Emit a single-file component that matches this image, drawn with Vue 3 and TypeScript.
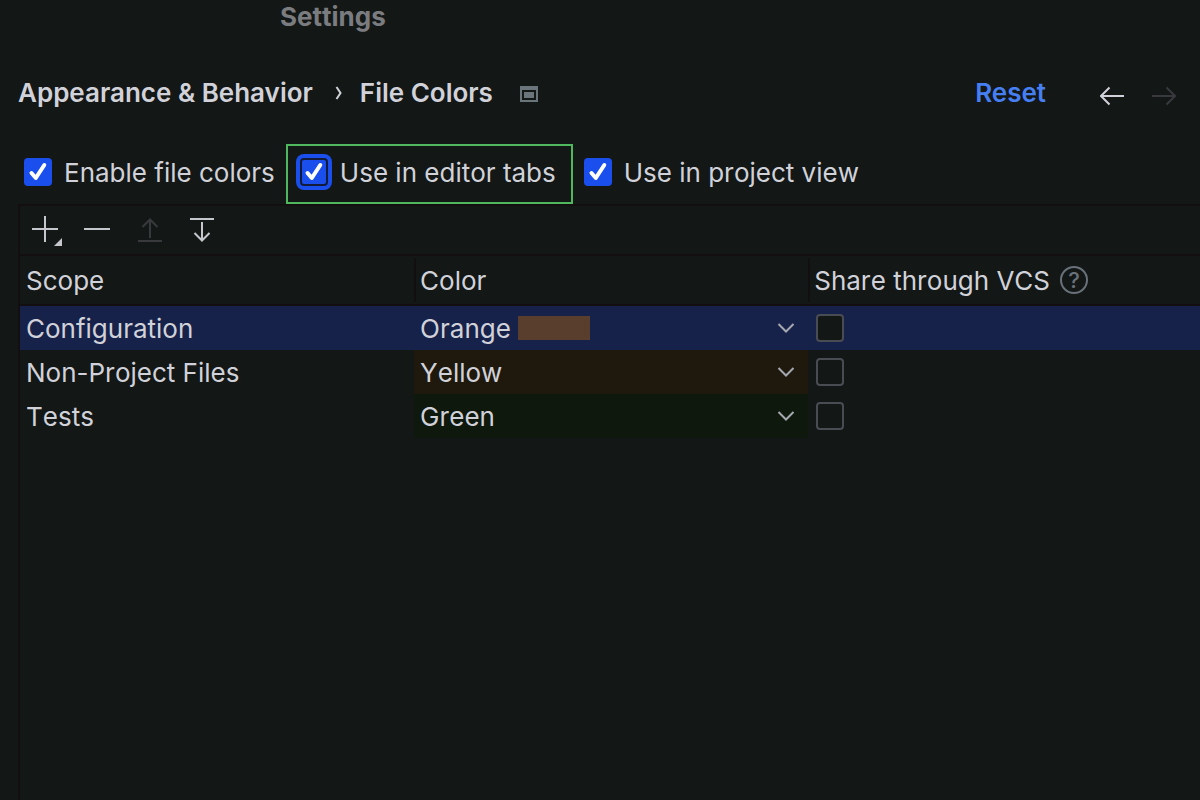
<script setup lang="ts">
import { ref } from 'vue'

interface Option {
  id: string
  label: string
  checked: boolean
  focused?: boolean
}

interface ScopeRow {
  scope: string
  color: string
  tone: string
  shared: boolean
}

const options = ref<Option[]>([
  { id: 'enable', label: 'Enable file colors', checked: true },
  { id: 'tabs', label: 'Use in editor tabs', checked: true, focused: true },
  { id: 'project', label: 'Use in project view', checked: true },
])

const colors = ['Orange', 'Yellow', 'Green', 'Blue', 'Violet', 'Rose']

const rows = ref<ScopeRow[]>([
  { scope: 'Configuration', color: 'Orange', tone: 'selected', shared: false },
  { scope: 'Non-Project Files', color: 'Yellow', tone: 'yellow', shared: false },
  { scope: 'Tests', color: 'Green', tone: 'green', shared: false },
])
</script>

<template>
  <div class="settings">
    <h1 class="title">Settings</h1>

    <header class="head">
      <nav class="crumbs" aria-label="Breadcrumb">
        <a href="#appearance">Appearance &amp; Behavior</a>
        <svg class="sep" width="8" height="16" viewBox="0 0 8 16" aria-hidden="true">
          <path d="M1.5 2 L5.5 8 L1.5 14" />
        </svg>
        <span>File Colors</span>
        <svg class="scope-icon" width="18" height="16" viewBox="0 0 18 16" aria-hidden="true">
          <path fill-rule="evenodd" d="M0 0H18V16H0ZM2 4V14H16V4Z" />
          <rect x="4" y="6" width="10" height="6" />
        </svg>
      </nav>
      <button type="button" class="reset">Reset</button>
      <button type="button" class="nav-btn" aria-label="Back">
        <svg width="24" height="20" viewBox="0 0 24 20">
          <path d="M24 10H1.5M9.5 1.5L1 10L9.5 18.5" />
        </svg>
      </button>
      <button type="button" class="nav-btn off" aria-label="Forward" disabled>
        <svg width="24" height="20" viewBox="0 0 24 20">
          <path d="M0 10H22.5M14.5 1.5L23 10L14.5 18.5" />
        </svg>
      </button>
    </header>

    <div class="options">
      <label v-for="o in options" :key="o.id" class="option" :class="{ focused: o.focused }" :for="o.id">
        <span class="box">
          <input :id="o.id" v-model="o.checked" type="checkbox" />
          <svg v-if="o.checked" class="tick" width="28" height="28" viewBox="0 0 28 28" aria-hidden="true">
            <path d="M7.5 15L11.8 20L20.3 7" />
          </svg>
        </span>
        {{ o.label }}
      </label>
    </div>

    <section class="panel">
      <div class="toolbar" role="toolbar" aria-label="Scopes">
        <button type="button" aria-label="Add">
          <svg width="40" height="40" viewBox="0 0 40 40">
            <path d="M7 19H33M20 6V32" />
            <path class="solid" d="M37 28V36H29Z" />
          </svg>
        </button>
        <button type="button" aria-label="Remove">
          <svg width="40" height="40" viewBox="0 0 40 40"><path d="M7 19H33" /></svg>
        </button>
        <button type="button" class="off" aria-label="Move up" disabled>
          <svg width="40" height="40" viewBox="0 0 40 40">
            <path d="M9 31H33M21 28V9.5M13.5 17L21 9.5L28.5 17" />
          </svg>
        </button>
        <button type="button" aria-label="Move down">
          <svg width="40" height="40" viewBox="0 0 40 40">
            <path d="M9 9H33M21 12V30.5M13.5 23L21 30.5L28.5 23" />
          </svg>
        </button>
      </div>

      <table>
        <colgroup>
          <col class="third" />
          <col class="third" />
          <col />
        </colgroup>
        <thead>
          <tr>
            <th scope="col"><div class="th">Scope</div></th>
            <th scope="col"><div class="th line">Color</div></th>
            <th scope="col">
              <div class="th line">
                Share through VCS
                <button type="button" class="help" aria-label="Help">?</button>
              </div>
            </th>
          </tr>
        </thead>
        <tbody>
          <tr v-for="r in rows" :key="r.scope" :class="r.tone">
            <td>{{ r.scope }}</td>
            <td class="color">
              <div class="picker">
                <select v-model="r.color" :aria-label="`Color for ${r.scope}`">
                  <option v-for="c in colors" :key="c">{{ c }}</option>
                </select>
                <span v-if="r.tone === 'selected'" class="swatch"></span>
                <svg class="chevron" width="18" height="12" viewBox="0 0 18 12" aria-hidden="true">
                  <path d="M1.5 2L9 9.5L16.5 2" />
                </svg>
              </div>
            </td>
            <td class="share">
              <input v-model="r.shared" type="checkbox" :aria-label="`Share ${r.scope} through VCS`" />
            </td>
          </tr>
        </tbody>
      </table>
    </section>
  </div>
</template>

<style>
body {
  margin: 0;
  background: #131716;
}
</style>

<style scoped>
.settings {
  box-sizing: border-box;
  display: flex;
  flex-direction: column;
  min-height: 100vh;
  background: #131716;
  color: #d1d2d9;
  font: 400 26px/32px Inter, "Noto Sans", sans-serif;
  font-kerning: none;
  overflow: hidden;
}
* {
  box-sizing: border-box;
}
button,
select {
  margin: 0;
  padding: 0;
  border: 0;
  background: none;
  color: inherit;
  font: inherit;
  outline: none;
}
svg {
  display: block;
  flex: none;
  fill: none;
  stroke: currentColor;
  stroke-width: 2;
}
.title {
  margin: 0;
  padding-left: 280px;
  color: #7b7c80;
  font-size: 26px;
  font-weight: 700;
  line-height: 34px;
}
.head {
  display: flex;
  align-items: center;
  height: 110px;
  padding: 8px 24px 0 18px;
  font-weight: 600;
  font-kerning: normal;
}
.crumbs {
  display: flex;
  align-items: center;
  flex: 1;
  white-space: nowrap;
}
.crumbs a {
  color: inherit;
  text-decoration: none;
}
.sep {
  margin: 0 17px 0 22px;
}
.scope-icon {
  margin: 2px 0 0 27px;
  fill: #69757b;
  stroke: none;
}
.reset {
  margin-right: 54px;
  color: #467ff2;
}
.nav-btn {
  padding-top: 6px;
}
.nav-btn + .nav-btn {
  margin-left: 28px;
}
.off {
  color: #38393c;
}
.options {
  display: flex;
  padding-left: 24px;
}
.option {
  display: flex;
  align-items: center;
  gap: 12px;
  height: 60px;
  padding-bottom: 2px;
  white-space: nowrap;
}
.option.focused {
  margin: 0 11px;
  padding: 0 15px 2px 12px;
  border: 2px solid #4fb85f;
}
.box {
  position: relative;
  flex: none;
  height: 28px;
  margin-bottom: 2px;
}
input[type='checkbox'] {
  display: block;
  appearance: none;
  width: 28px;
  height: 28px;
  margin: 0;
  border: 2px solid #4a4c54;
  border-radius: 4px;
  background: #131716;
}
.box input[type='checkbox']:checked {
  border: 0;
  background: #1a4fee;
}
.focused .box input[type='checkbox']:checked {
  border: 2px solid #131b3a;
  box-shadow: 0 0 0 4px #1a4fee;
}
.tick {
  position: absolute;
  inset: 0;
  color: #fff;
  stroke-width: 4;
  stroke-linecap: round;
  stroke-linejoin: round;
  pointer-events: none;
}
.panel {
  flex: 1;
  margin-left: 18px;
  border-top: 2px solid #130e0f;
  border-left: 2px solid #130e0f;
}
.toolbar {
  display: flex;
  align-items: center;
  gap: 12px;
  height: 50px;
  padding-left: 5px;
  border-bottom: 2px solid #130e0f;
}
.toolbar button:not(.off) {
  color: #c6c7cc;
}
.solid {
  fill: currentColor;
  stroke: none;
}
table {
  width: 100%;
  table-layout: fixed;
  border-collapse: separate;
  border-spacing: 0;
}
.third {
  width: 33.4%;
}
th {
  height: 50px;
  padding: 0;
  border-bottom: 2px solid #130e0f;
  font-weight: 400;
  text-align: left;
}
.th {
  display: flex;
  align-items: center;
  height: 44px;
  padding: 2px 0 0 6px;
  white-space: nowrap;
}
.th.line {
  padding-left: 4px;
  border-left: 2px solid #130e0f;
}
.help {
  width: 28px;
  height: 28px;
  margin: 0 0 2px 10px;
  border: 2px solid #69717a;
  border-radius: 50%;
  color: #69717a;
  font-size: 22px;
  font-weight: 500;
  line-height: 24px;
  text-align: center;
}
td {
  height: 44px;
  padding: 2px 0 0 6px;
}
.color {
  padding: 0;
}
.picker {
  position: relative;
  height: 44px;
}
select {
  display: block;
  appearance: none;
  width: 100%;
  height: 44px;
  padding: 2px 0 0 6px;
  font-kerning: none;
}
.chevron {
  position: absolute;
  top: 16px;
  right: 13px;
  color: #a6a8b0;
  pointer-events: none;
}
.swatch {
  position: absolute;
  top: 10px;
  left: 104px;
  width: 72px;
  height: 24px;
  background: #5a3e2d;
  pointer-events: none;
}
.selected td {
  background: #17224b;
}
.yellow .color {
  background: #1f190d;
}
.green .color {
  background: #0f180d;
}
.share {
  padding: 0 0 0 8px;
}
</style>
